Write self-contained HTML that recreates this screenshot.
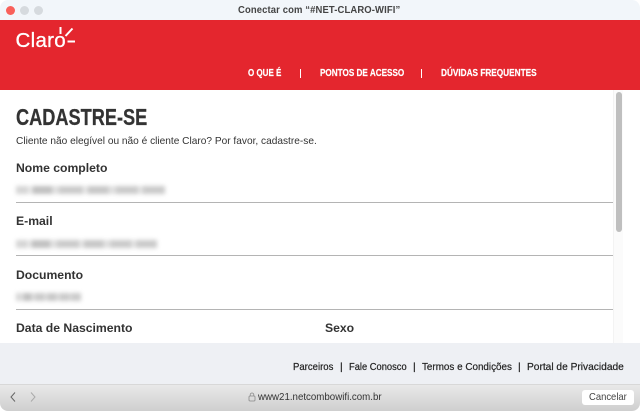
<!DOCTYPE html>
<html><head><meta charset="utf-8"><style>
html,body{margin:0;padding:0;background:#fff}
body{width:640px;height:411px;position:relative;overflow:hidden;font-family:"Liberation Sans",sans-serif}
.a{position:absolute;white-space:nowrap;transform-origin:0 50%}
.lab{font-size:12.2px;font-weight:bold;color:#333;line-height:16px;left:16px}
.line{position:absolute;left:16px;width:598px;height:1px;background:#b4b4b4}
.b{position:absolute;height:8px;filter:blur(2.2px);opacity:.62;background:linear-gradient(90deg,#bbb 0 8%,#ddd 8% 11%,#999 11% 24%,#ccc 24% 29%,#aaa 29% 45%,#ddd 45% 48%,#a5a5a5 48% 62%,#ccc 62% 67%,#aaa 67% 82%,#d5d5d5 82% 85%,#aaa 85% 100%)}
.nav{font-size:10px;font-weight:bold;color:#fff;top:67.5px;line-height:12px;-webkit-text-stroke:.2px #fff}
.foot{font-size:10.5px;color:#222;top:361px;line-height:13px;-webkit-text-stroke:.2px #222}
</style></head><body>
<div class="a" style="left:0;top:0;width:640px;height:20px;background:#f2f6fa"></div>
<div class="a" style="left:5.5px;top:5.5px;width:9px;height:9px;border-radius:50%;background:#f9605a"></div>
<div class="a" style="left:19.5px;top:5.5px;width:9px;height:9px;border-radius:50%;background:#d6dade"></div>
<div class="a" style="left:33.5px;top:5.5px;width:9px;height:9px;border-radius:50%;background:#d6dade"></div>
<div class="a" style="left:238px;top:3.5px;font-size:10px;font-weight:bold;color:#444;line-height:13px;letter-spacing:.12px;transform:scaleX(.947)">Conectar com “#NET-CLARO-WIFI”</div>

<div class="a" style="left:0;top:19.5px;width:640px;height:70.5px;background:#e4262e"></div>
<div class="a" style="left:15.5px;top:29px;font-size:20.5px;color:#fff;line-height:24px;letter-spacing:.3px;-webkit-text-stroke:.3px #fff">Claro</div>
<svg class="a" style="left:50px;top:24px" width="30" height="26" viewBox="0 0 30 26"><g stroke="#fff" stroke-width="2" fill="none"><path d="M10.5 3v7"/><path d="M22.5 4.5l-7 7.5"/><path d="M17.5 17.5h7.5"/></g></svg>
<div class="a nav" style="left:248px;transform:scaleX(.8)">O QUE É</div>
<div class="a" style="left:299.5px;top:69px;width:1.5px;height:9px;background:#fff"></div>
<div class="a nav" style="left:320px;transform:scaleX(.815)">PONTOS DE ACESSO</div>
<div class="a" style="left:420.5px;top:69px;width:1.5px;height:9px;background:#fff"></div>
<div class="a nav" style="left:441px;transform:scaleX(.823)">DÚVIDAS FREQUENTES</div>

<div class="a" style="left:16px;top:103px;font-size:23px;font-weight:bold;color:#333;line-height:28px;transform:scaleX(.79);-webkit-text-stroke:.25px #333">CADASTRE-SE</div>
<div class="a" style="left:16px;top:134.5px;font-size:10.5px;color:#333;line-height:13px;transform:scaleX(.965)">Cliente não elegível ou não é cliente Claro? Por favor, cadastre-se.</div>

<div class="a lab" style="top:160px">Nome completo</div>
<div class="b" style="left:16px;top:186px;width:149px"></div>
<div class="line" style="top:202px"></div>
<div class="a lab" style="top:213px">E-mail</div>
<div class="b" style="left:16px;top:240px;width:141px"></div>
<div class="line" style="top:255px"></div>
<div class="a lab" style="top:267px">Documento</div>
<div class="b" style="left:16px;top:293px;width:65px"></div>
<div class="line" style="top:309px"></div>
<div class="a lab" style="top:320px">Data de Nascimento</div>
<div class="a lab" style="left:325px;top:320px">Sexo</div>

<div class="a" style="left:613px;top:90px;width:10px;height:253px;background:#fbfbfb;border-left:1px solid #f3f3f3;box-sizing:border-box"></div>
<div class="a" style="left:616px;top:92px;width:6px;height:140px;border-radius:3px;background:#bfbfbf"></div>

<div class="a" style="left:0;top:343px;width:640px;height:41px;background:#eef0f4"></div>
<div class="a foot" style="left:293px;transform:scaleX(.91)">Parceiros</div>
<div class="a foot" style="left:340px">|</div>
<div class="a foot" style="left:349px;transform:scaleX(.89)">Fale Conosco</div>
<div class="a foot" style="left:413px">|</div>
<div class="a foot" style="left:422px;transform:scaleX(.94)">Termos e Condições</div>
<div class="a foot" style="left:518px">|</div>
<div class="a foot" style="left:527px;transform:scaleX(.97)">Portal de Privacidade</div>

<div class="a" style="left:0;top:384px;width:640px;height:27px;background:linear-gradient(#e9e9e9,#cfcfcf);border-top:1px solid #d8d8d8;box-sizing:border-box"></div>
<svg class="a" style="left:8px;top:391px" width="30" height="12" viewBox="0 0 30 12"><g fill="none" stroke-width="1"><path d="M7 1.5L3 6l4 4.5" stroke="#666"/><path d="M23 1.5L27 6l-4 4.5" stroke="#aaa"/></g></svg>
<svg class="a" style="left:248px;top:392px" width="8" height="10" viewBox="0 0 8 10"><g fill="none" stroke="#888" stroke-width=".8"><rect x="1" y="4" width="6" height="5" rx="1"/><path d="M2.2 4V2.8a1.8 1.8 0 0 1 3.6 0V4"/></g></svg>
<div class="a" style="left:258px;top:391px;font-size:10.5px;color:#333;line-height:13px;transform:scaleX(.925)">www21.netcombowifi.com.br</div>
<div class="a" style="left:582px;top:390px;width:52px;height:14.5px;border-radius:3px;background:#fff"></div>
<div class="a" style="left:589px;top:391px;font-size:10.5px;color:#444;line-height:13px;transform:scaleX(.9)">Cancelar</div>
<div class="a" style="left:0;top:0;width:640px;height:411px;border-radius:8px;box-shadow:0 0 0 20px #fff"></div>
</body></html>
